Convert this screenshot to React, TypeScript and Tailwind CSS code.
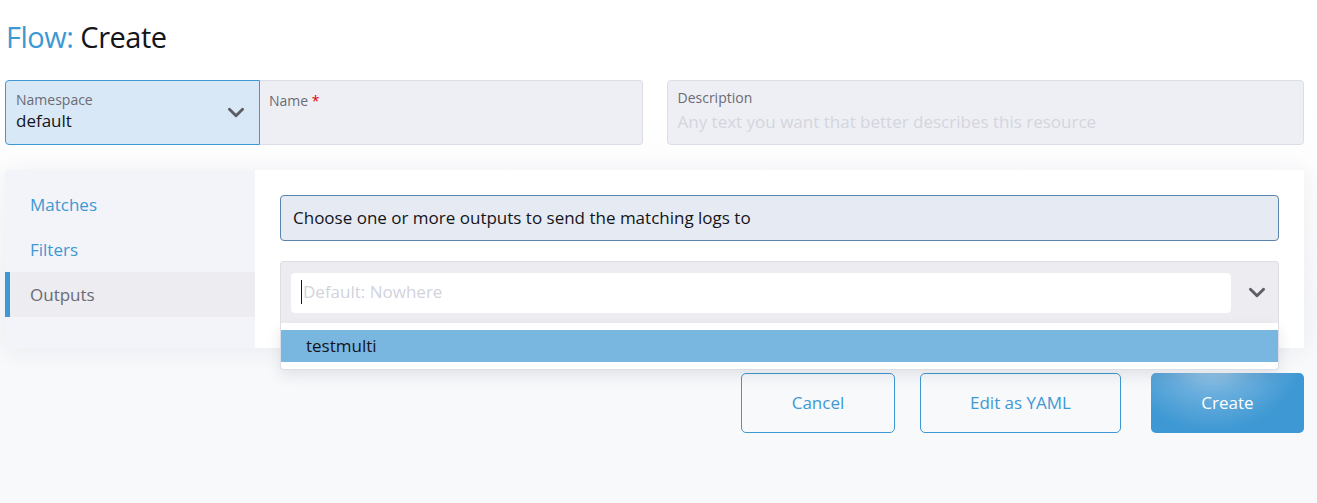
function Chevron({ className }: { className?: string }) {
  return (
    <svg viewBox="0 0 16 10" className={className} fill="none">
      <polyline points="2,2 8,8 14,2" stroke="currentColor" strokeWidth="2.6" strokeLinecap="round" strokeLinejoin="round" />
    </svg>
  );
}

export default function App() {
  return (
    <div className="min-h-[503px] bg-gradient-to-b from-white from-20% to-[#f8f9fb] to-60% pl-[5px] pr-[13px] font-['Open_Sans',sans-serif] text-[#141419]">
      {/* Title */}
      <h1 className="pt-[19px] pl-[1px] text-[29px] leading-[36px] tracking-[-0.5px]">
        <span className="text-[#3d98d3]">Flow:</span> Create
      </h1>

      {/* Top inputs */}
      <div className="mt-[25px] grid grid-cols-2 gap-6">
        <div className="flex h-[65px]">
          <div className="flex w-[255px] items-center justify-between rounded-l-[4px] border border-[#3d98d3] bg-[#d8e8f6] pb-[1px] pl-[10px] pr-[14px]">
            <div className="flex flex-col">
              <span className="text-[14px] leading-[18px] text-[#6b6b74]">Namespace</span>
              <span className="text-[17px] leading-[24px]">default</span>
            </div>
            <Chevron className="h-[11px] w-[18px] text-[#5d5d66]" />
          </div>
          <div className="flex-1 rounded-r-[4px] border border-l-0 border-[#dcdee7] bg-[#eeeff4] pl-[9px] pt-[7px]">
            <span className="text-[14px] leading-[18px] text-[#6b6b74]">
              Name <span className="text-[#e00000]">*</span>
            </span>
          </div>
        </div>
        <div className="flex h-[65px] flex-col rounded-[4px] border border-[#dcdee7] bg-[#eeeff4] pl-[10px] pt-[8px]">
          <span className="text-[14px] leading-[18px] text-[#6b6b74]">Description</span>
          <span className="mt-[2px] text-[17px] leading-[26px] text-[#d4d5de]">Any text you want that better describes this resource</span>
        </div>
      </div>

      {/* Tabbed card */}
      <div className="mt-[25px] flex h-[178px] rounded-[4px] shadow-[0_2px_24px_rgba(40,40,70,0.07)]">
        <div className="w-[250px] rounded-l-[4px] bg-[#f3f4f9] pt-[12px] text-[17px]">
          <div className="flex h-[45px] items-center pl-[25px] text-[#3d98d3]">Matches</div>
          <div className="flex h-[45px] items-center pl-[25px] text-[#3d98d3]">Filters</div>
          <div className="flex h-[45px] items-center border-l-[5px] border-[#3d98d3] bg-[#ececf1] pl-[20px] text-[#6b6b74]">Outputs</div>
        </div>
        <div className="flex-1 bg-white p-[25px]">
          <div className="flex h-[46px] items-center rounded-[4px] border border-[#5a83ad] bg-[#e6ebf3] px-[12px] text-[17px]">
            Choose one or more outputs to send the matching logs to
          </div>
          <div className="relative mt-[20px]">
            <div className="flex h-[62px] items-center rounded-t-[4px] border border-b-0 border-[#dcdee6] bg-[#ececf1] pl-[10px] pr-[12px]">
              <div className="flex h-[40px] flex-1 items-center rounded-[4px] bg-white pb-[2px] pl-[10px] text-[17px] text-[#d1d3dd]">
                <span className="mr-[1px] h-[24px] w-[1px] bg-[#141419]" />
                Default: Nowhere
              </div>
              <Chevron className="ml-[17px] h-[11px] w-[18px] text-[#5d5d66]" />
            </div>
            <div className="absolute left-0 right-0 top-[62px] rounded-b-[4px] border border-t-0 border-[#dcdee6] bg-white pb-[7px] pt-[7px] shadow-[0_6px_14px_rgba(40,40,70,0.1)]">
              <div className="flex h-[32px] items-center bg-[#79b6e0] pl-[25px] text-[17px]">testmulti</div>
            </div>
          </div>
        </div>
      </div>

      {/* Actions */}
      <div className="mt-[25px] flex justify-end text-[17px]">
        <button type="button" className="h-[60px] w-[154px] rounded-[5px] border border-[#3d98d3] text-[#3d98d3]">
          Cancel
        </button>
        <button type="button" className="ml-[25px] h-[60px] w-[201px] rounded-[5px] border border-[#3d98d3] text-[#3d98d3]">
          Edit as YAML
        </button>
        <button
          type="button"
          className="ml-[30px] h-[60px] w-[153px] rounded-[5px] bg-[#3d98d3] bg-[radial-gradient(ellipse_at_40%_-30%,#b3d4ec_0%,#6aaedd_35%,#3d98d3_70%)] text-white"
        >
          Create
        </button>
      </div>
    </div>
  );
}
